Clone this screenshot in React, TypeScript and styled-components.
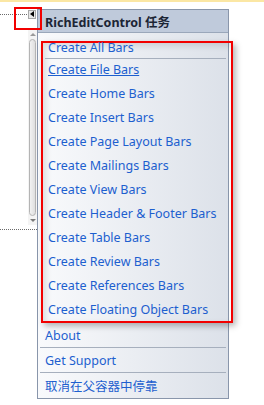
import React from "react";
import styled, { createGlobalStyle } from "styled-components";

const GlobalStyle = createGlobalStyle`
  html, body {
    margin: 0;
    padding: 0;
    background: #ffffff;
  }
  body {
    font-family: "Noto Sans", "Noto Sans CJK SC", sans-serif;
  }
`;

const Page = styled.div`
  position: relative;
  width: 264px;
  height: 405px;
  overflow: hidden;
  background: #ffffff;
  display: flex;
  flex-direction: column;
`;

const TopStrip = styled.div`
  height: 2px;
  background: #fbe7a4;
`;

const Main = styled.div`
  display: flex;
  padding-top: 7px;
`;

const DockColumn = styled.div`
  width: 37px;
  display: flex;
  flex-direction: column;
`;

const DockRow = styled.div`
  display: flex;
  align-items: center;
  height: 10px;
`;

const DottedRule = styled.div`
  flex: 1;
  border-top: 1px dotted #6a6a6a;
`;

const PinButton = styled.div`
  width: 8px;
  height: 9px;
  margin: 0 1px 0 1px;
  background: #e8e8e8;
  border: 1px solid #a8a8a8;
  box-sizing: border-box;
  display: flex;
  align-items: center;
  justify-content: center;

  &::before {
    content: "";
    border-style: solid;
    border-width: 3px 4px 3px 0;
    border-color: transparent #000 transparent transparent;
  }
`;

const ScrollTrack = styled.div`
  margin: 11px 0 0 28px;
  width: 9px;
  height: 195px;
  box-sizing: border-box;
  background: #f4f4f4;
  display: flex;
  flex-direction: column;
  align-items: center;
`;

const Arrow = styled.div<{ $up?: boolean }>`
  width: 0;
  height: 0;
  margin: 3px 0;
  border-left: 3px solid transparent;
  border-right: 3px solid transparent;
  ${({ $up }) =>
    $up ? "border-bottom: 3px solid #9a9a9a;" : "border-top: 3px solid #7a7a7a;"}
`;

const Thumb = styled.div`
  flex: 1;
  width: 7px;
  box-sizing: border-box;
  border: 1px solid #b4b4b4;
  border-radius: 4px;
  background: linear-gradient(to right, #f2f2f2, #dedede);
`;

const BottomRule = styled.div`
  margin-top: 4px;
  border-top: 1px dotted #6a6a6a;
`;

const Panel = styled.div`
  width: 192px;
  height: 390px;
  box-sizing: border-box;
  border: 1px solid #8996ab;
  display: flex;
  flex-direction: column;
  background: linear-gradient(to right, #f9fafc, #dce1e9);
`;

const Header = styled.div`
  height: 22px;
  flex: none;
  background: #bfcadb;
  border-bottom: 1px solid #9aa7ba;
  padding-left: 7px;
  display: flex;
  align-items: center;
  font-weight: bold;
  font-size: 12.5px;
  color: #1c2535;
`;

const Highlight = styled.div`
  margin: 8px -5px 0 3px;
  height: 282px;
  flex: none;
  box-sizing: border-box;
  border: 2px solid #f20000;
  box-shadow: 3px 3px 6px rgba(0, 0, 0, 0.28),
    inset 3px 3px 6px rgba(0, 0, 0, 0.12);
`;

const ItemList = styled.div`
  display: flex;
  flex-direction: column;
`;

const Item = styled.div<{ $indent: number; $hover?: boolean; $lift?: boolean }>`
  height: ${({ $lift }) => ($lift ? 21 : 24)}px;
  margin-bottom: ${({ $lift }) => ($lift ? 3 : 0)}px;
  flex: none;
  box-sizing: border-box;
  padding-left: ${({ $indent }) => $indent}px;
  display: flex;
  align-items: center;
  font-size: 12.5px;
  color: #1d5fcf;
  white-space: nowrap;
  text-decoration: ${({ $hover }) => ($hover ? "underline" : "none")};
`;

const TopItem = styled(Item)`
  height: 15px;
  margin-bottom: 0;
  align-items: flex-start;
  line-height: 9px;
`;

const Separator = styled.div<{ $left: number; $right: number }>`
  height: 1px;
  flex: none;
  margin: 0 ${({ $right }) => $right}px 0 ${({ $left }) => $left}px;
  background: #a6afbd;
`;

const Callout = styled.div`
  position: absolute;
  left: 14px;
  top: 7px;
  width: 28px;
  height: 23px;
  box-sizing: border-box;
  border: 2px solid #f20000;
`;

const bars = [
  "Create Home Bars",
  "Create Insert Bars",
  "Create Page Layout Bars",
  "Create Mailings Bars",
  "Create View Bars",
  "Create Header & Footer Bars",
  "Create Table Bars",
  "Create Review Bars",
  "Create References Bars",
  "Create Floating Object Bars",
];

export default function App() {
  return (
    <Page>
      <GlobalStyle />
      <TopStrip />
      <Main>
        <DockColumn>
          <DockRow>
            <DottedRule />
            <PinButton />
          </DockRow>
          <ScrollTrack>
            <Arrow $up />
            <Thumb />
            <Arrow />
          </ScrollTrack>
          <BottomRule />
        </DockColumn>
        <Panel>
          <Header>RichEditControl 任务</Header>
          <Highlight>
            <ItemList>
              <TopItem $indent={5}>Create All Bars</TopItem>
              <Separator $left={2} $right={5} />
              <Item $indent={5} $lift $hover>
                Create File Bars
              </Item>
              {bars.map((b) => (
                <Item key={b} $indent={5} $lift>
                  {b}
                </Item>
              ))}
            </ItemList>
          </Highlight>
          <ItemList>
            <Item $indent={7}>About</Item>
            <Separator $left={2} $right={2} />
            <Item $indent={7}>Get Support</Item>
            <Separator $left={2} $right={2} />
            <Item $indent={7}>取消在父容器中停靠</Item>
          </ItemList>
        </Panel>
      </Main>
      <Callout />
    </Page>
  );
}
